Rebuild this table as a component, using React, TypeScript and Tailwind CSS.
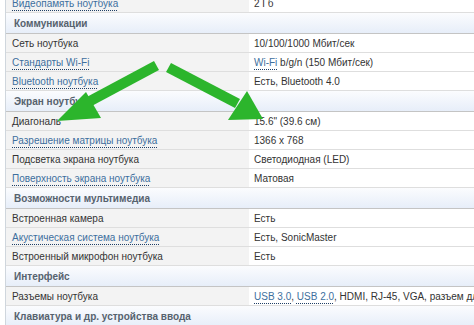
import type { ReactNode } from 'react';

type Row =
  | { kind: 'group'; title: string }
  | { kind: 'spec'; label: string; link?: boolean; value: ReactNode };

function Term({ children }: { children: ReactNode }) {
  return (
    <span className="text-[#3d6f9e] underline decoration-dotted decoration-[#1f3f66] underline-offset-[3px]">
      {children}
    </span>
  );
}

const rows: Row[] = [
  { kind: 'spec', label: 'Видеопамять ноутбука', link: true, value: '2 Гб' },
  { kind: 'group', title: 'Коммуникации' },
  { kind: 'spec', label: 'Сеть ноутбука', value: '10/100/1000 Мбит/сек' },
  {
    kind: 'spec',
    label: 'Стандарты Wi-Fi',
    link: true,
    value: (
      <>
        <Term>Wi-Fi</Term>&nbsp;b/g/n (150 Мбит/сек)
      </>
    ),
  },
  { kind: 'spec', label: 'Bluetooth ноутбука', link: true, value: 'Есть, Bluetooth 4.0' },
  { kind: 'group', title: 'Экран ноутбука' },
  { kind: 'spec', label: 'Диагональ', value: '15.6" (39.6 см)' },
  { kind: 'spec', label: 'Разрешение матрицы ноутбука', link: true, value: '1366 x 768' },
  { kind: 'spec', label: 'Подсветка экрана ноутбука', value: 'Светодиодная (LED)' },
  { kind: 'spec', label: 'Поверхность экрана ноутбука', link: true, value: 'Матовая' },
  { kind: 'group', title: 'Возможности мультимедиа' },
  { kind: 'spec', label: 'Встроенная камера', value: 'Есть' },
  { kind: 'spec', label: 'Акустическая система ноутбука', link: true, value: 'Есть, SonicMaster' },
  { kind: 'spec', label: 'Встроенный микрофон ноутбука', value: 'Есть' },
  { kind: 'group', title: 'Интерфейс' },
  {
    kind: 'spec',
    label: 'Разъемы ноутбука',
    value: (
      <>
        <Term>USB 3.0</Term>,&nbsp;<Term>USB 2.0</Term>, HDMI, RJ-45, VGA, разъем для наушников
      </>
    ),
  },
  { kind: 'group', title: 'Клавиатура и др. устройства ввода' },
];

// two green pointer arrows drawn over the table
function Arrows() {
  return (
    <svg
      className="pointer-events-none absolute left-0 top-0"
      width="474"
      height="325"
      viewBox="0 0 474 325"
    >
      <g fill="#2cb52c">
        <polygon points="154,61 159,70 88,108 83,99" />
        <polygon points="57,121 86,92 101,118" />
        <polygon points="166,72 171,63 240,99 235,108" />
        <polygon points="263,119 228,120 247,91" />
      </g>
    </svg>
  );
}

export default function App() {
  return (
    <div className="relative h-[325px] w-[474px] overflow-hidden bg-white font-['Liberation_Sans',Arial,sans-serif] text-[10px] text-[#333]">
      <div className="-mt-[6px] ml-[5px] border-l border-[#cfd6dd]">
        {rows.map((row, i) =>
          row.kind === 'group' ? (
            <div
              key={i}
              className="flex h-[21px] items-center border-b border-[#c4c4c4] bg-gradient-to-b from-[#fbfcfe] to-[#e7eef9] pl-[8px] text-[10px] font-bold text-[#56626e]"
            >
              {row.title}
            </div>
          ) : (
            <div key={i} className="flex h-[19px] items-center border-b border-[#dedede]">
              <div className="flex h-full w-[243px] shrink-0 items-center bg-[#f3f3f3] pl-[6px]">
                {row.link ? <Term>{row.label}</Term> : row.label}
              </div>
              <div className="flex h-full flex-1 items-center whitespace-nowrap bg-white pl-[5px]">
                {row.value}
              </div>
            </div>
          ),
        )}
      </div>
      <Arrows />
    </div>
  );
}
